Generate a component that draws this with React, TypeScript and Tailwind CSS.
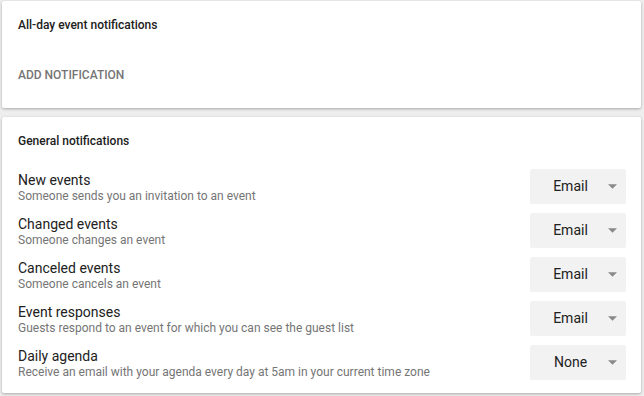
import React from 'react';

type Row = { title: string; desc: string; value: string };

const rows: Row[] = [
  { title: 'New events', desc: 'Someone sends you an invitation to an event', value: 'Email' },
  { title: 'Changed events', desc: 'Someone changes an event', value: 'Email' },
  { title: 'Canceled events', desc: 'Someone cancels an event', value: 'Email' },
  { title: 'Event responses', desc: 'Guests respond to an event for which you can see the guest list', value: 'Email' },
  { title: 'Daily agenda', desc: 'Receive an email with your agenda every day at 5am in your current time zone', value: 'None' },
];

function Select({ value }: { value: string }) {
  return (
    <div className="flex h-[35px] w-[96px] shrink-0 items-center rounded-[2px] bg-[#f2f2f2]">
      <span className="flex-1 pl-[3px] text-center text-[14px] text-[#212121]">{value}</span>
      <svg className="mr-[9px]" width="9" height="5" viewBox="0 0 10 5">
        <path d="M0 0h10L5 5z" fill="#8a8a8a" />
      </svg>
    </div>
  );
}

export default function App() {
  return (
    <div
      className="flex h-[396px] w-[644px] flex-col gap-[9px] bg-[#eeeeee] pl-[2px] pr-[3px] pt-[1px]"
      style={{ fontFamily: 'Roboto, "Liberation Sans", sans-serif' }}
    >
      <div className="flex h-[107px] flex-col rounded-[2px] bg-white px-[16px] pt-[16px] shadow-[0_1px_3px_rgba(0,0,0,0.3)]">
        <h2 className="text-[12px] font-medium leading-[16px] text-[#212121]">All-day event notifications</h2>
        <button className="mt-[34px] self-start text-[12px] font-medium uppercase leading-[16px] text-[#757575]">
          Add notification
        </button>
      </div>

      <div className="flex flex-col rounded-[2px] bg-white pl-[16px] pr-[15px] pt-[16px] pb-[13px] shadow-[0_1px_3px_rgba(0,0,0,0.3)]">
        <h2 className="text-[12px] font-medium leading-[16px] text-[#212121]">General notifications</h2>
        <div className="mt-[20px] flex flex-col gap-[9px]">
          {rows.map((r) => (
            <div key={r.title} className="flex items-center justify-between">
              <div className="flex flex-col pt-[1px]">
                <span className="text-[14px] leading-[18px] text-[#212121]">{r.title}</span>
                <span className="text-[12px] leading-[15px] text-[#757575]">{r.desc}</span>
              </div>
              <Select value={r.value} />
            </div>
          ))}
        </div>
      </div>
    </div>
  );
}
